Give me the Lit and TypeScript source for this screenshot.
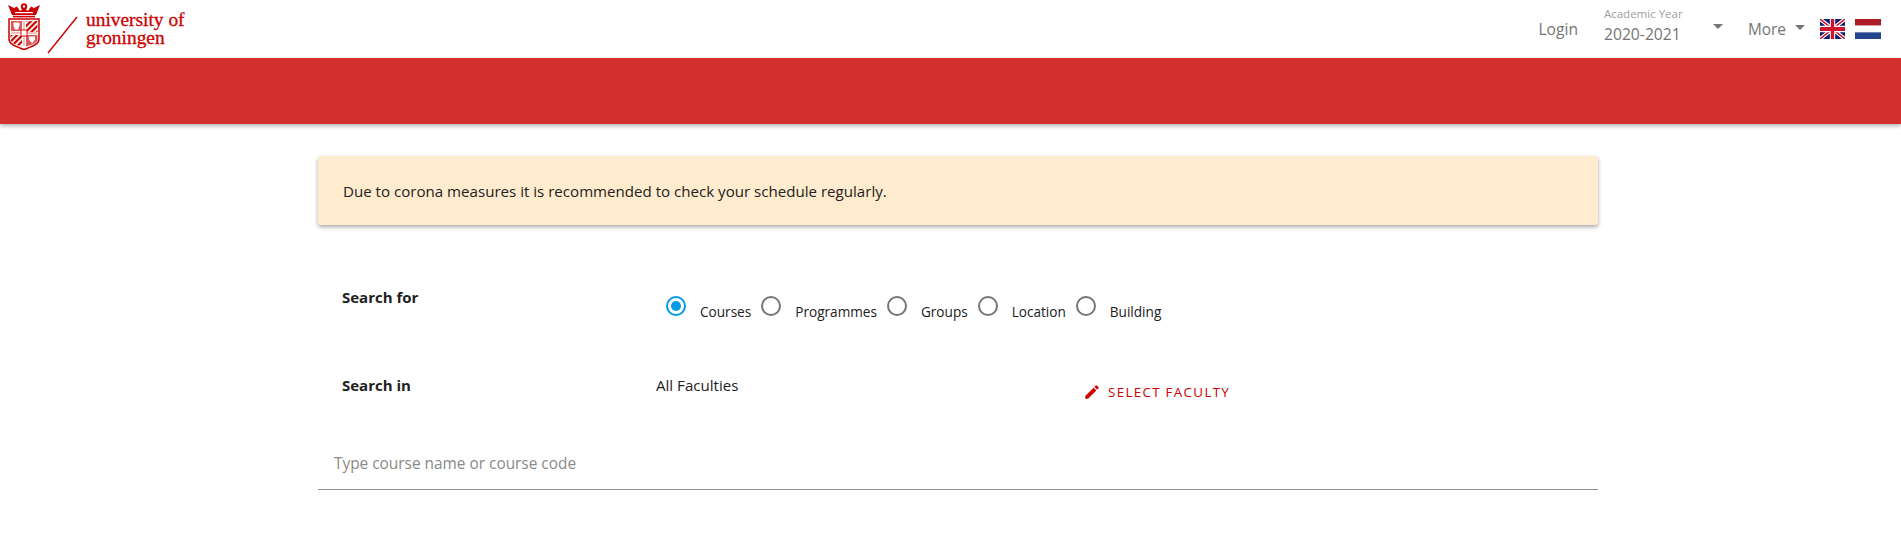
import { LitElement, html, css, svg } from "lit";
import { customElement } from "lit/decorators.js";

const crest = svg`<svg class="crest" viewBox="0 0 32 47" width="32" height="47">
  <defs>
    <pattern id="hatch" width="4" height="4" patternUnits="userSpaceOnUse" patternTransform="rotate(-45)">
      <rect width="4" height="2.2" fill="#cc0000"/>
    </pattern>
  </defs>
  <g fill="#cc0000">
    <path d="M0 2 L6 5 L9 3.5 L12 8 L16 5 L20 8 L23 3.5 L26 5 L32 2 L28 12 H4 Z"/>
    <circle cx="16" cy="3.4" r="3.2"/>
    <circle cx="16" cy="3.4" r="1.2" fill="#fff"/>
    <path d="M7 9 h18 v1.2 h-18 z" fill="#fff"/>
    <rect x="5" y="12.8" width="22" height="1.6"/>
  </g>
  <path d="M1 16 H31 V36 C31 42 22 44 16 46.5 C10 44 1 42 1 36 Z" fill="#fff" stroke="#cc0000" stroke-width="1.5"/>
  <g>
    <path d="M3 18 H14 V28 H3 Z" fill="#cc0000" opacity=".65"/>
    <path d="M5.5 19.5 h6 v3 l-1.5 4 h-3 l-1.5 -4 z" fill="#fff"/>
    <path d="M18 18 H29.5 V29 H18 Z" fill="url(#hatch)"/>
    <path d="M2.5 32 H14 V43.5 C10 42 2.5 41 2.5 36 Z" fill="url(#hatch)"/>
    <path d="M18 32 H29.5 V36 C29.5 41 22 42 18 43.5 Z" fill="#cc0000" opacity=".65"/>
    <path d="M21 33.5 h6 v3 l-2.5 3.5 h-1 l-2.5 -3.5 z" fill="#fff"/>
    <path d="M3 30 H29 M16 18 V43" stroke="#cc0000" stroke-width=".8" opacity=".6"/>
    <rect x="13" y="27" width="6" height="6" fill="#fff" stroke="#cc0000" stroke-width=".9"/>
  </g>
</svg>`;

const ukFlag = svg`<svg class="flag" viewBox="0 0 60 40" width="25" height="20" preserveAspectRatio="none">
  <rect width="60" height="40" fill="#0a1a6b"/>
  <path d="M0 0 L60 40 M60 0 L0 40" stroke="#fff" stroke-width="8"/>
  <path d="M0 0 L60 40 M60 0 L0 40" stroke="#cf142b" stroke-width="3"/>
  <path d="M30 0 V40 M0 20 H60" stroke="#fff" stroke-width="13"/>
  <path d="M30 0 V40 M0 20 H60" stroke="#cf142b" stroke-width="8"/>
</svg>`;

const nlFlag = svg`<svg class="flag" viewBox="0 0 3 3" width="26" height="20" preserveAspectRatio="none">
  <rect width="3" height="1" fill="#ae1c28"/>
  <rect y="1" width="3" height="1" fill="#fff"/>
  <rect y="2" width="3" height="1" fill="#21468b"/>
</svg>`;

const pencil = svg`<svg class="pencil" viewBox="0 0 24 24" width="18" height="18"><path fill="#cc0000" d="M3 17.25V21h3.75L17.81 9.94l-3.75-3.75L3 17.25zM20.71 7.04a1 1 0 0 0 0-1.41l-2.34-2.34a1 1 0 0 0-1.41 0l-1.83 1.83 3.75 3.75 1.83-1.83z"/></svg>`;

@customElement("app-root")
export class AppRoot extends LitElement {
  static styles = css`
    :host {
      display: block;
      width: 100%;
      min-height: 535px;
      background: #fff;
      font-family: "Open Sans", "Noto Sans", sans-serif;
      color: #212121;
      overflow: hidden;
    }
    .header {
      height: 58px;
      display: flex;
      align-items: flex-start;
      justify-content: space-between;
    }
    .logo {
      display: flex;
      align-items: flex-start;
      padding: 3px 0 0 8px;
    }
    .crest { display: block; }
    .slash { display: block; margin: 13px 0 0 7px; }
    .wordmark {
      margin: 8px 0 0 7px;
      font-family: "Liberation Serif", serif;
      font-size: 19.4px;
      line-height: 17.5px;
      color: #cc0000;
      font-weight: 400;
      -webkit-text-stroke: 0.3px #cc0000;
    }
    .nav {
      display: flex;
      align-items: flex-start;
      color: #757575;
      padding-right: 20px;
    }
    .login { font-size: 15.6px; line-height: 20px; margin-top: 19px; }
    .year { margin-left: 26px; width: 109px; margin-top: 7px; }
    .year-label { font-size: 11.5px; line-height: 13px; color: #9e9e9e; }
    .year-value { font-size: 15.7px; line-height: 20px; margin-top: 4px; }
    .caret {
      width: 0;
      height: 0;
      border-left: 5px solid transparent;
      border-right: 5px solid transparent;
      border-top: 5px solid #757575;
    }
    .caret.y { margin-top: 24px; }
    .more { font-size: 15.4px; line-height: 20px; margin: 20px 0 0 25px; }
    .caret.m { margin: 25px 0 0 9px; }
    .flag { display: block; margin-top: 19px; }
    .nav > .f1 { margin-left: 15px; }
    .nav > .f2 { margin-left: 10px; }
    .band {
      height: 66px;
      background: #d32f2f;
      box-shadow: 0 2px 4px rgba(0,0,0,.3);
    }
    .main {
      width: 1280px;
      margin: 32px 0 0 318px;
    }
    .alert {
      height: 69px;
      display: flex;
      align-items: center;
      padding-left: 25px;
      box-sizing: border-box;
      background: #ffebcd;
      border-radius: 3px;
      font-size: 15.1px;
      box-shadow: 0 2px 4px rgba(0,0,0,.35);
    }
    .row {
      display: grid;
      grid-template-columns: 316px 1fr;
      padding-left: 24px;
    }
    .row.for { margin-top: 62px; height: 88px; }
    .row.in { height: 69px; }
    .label { font-size: 15px; font-weight: 700; line-height: 20px; }
    .radios {
      display: flex;
      align-items: flex-start;
      margin: 6px 0 0 8px;
    }
    .radio {
      width: 20px;
      height: 20px;
      box-sizing: border-box;
      border: 2px solid #757575;
      border-radius: 50%;
      margin-top: 3px;
      flex: none;
      display: flex;
      align-items: center;
      justify-content: center;
    }
    .radio.on { border-color: #039be5; }
    .radio.on::after {
      content: "";
      width: 10px;
      height: 10px;
      background: #039be5;
      border-radius: 50%;
    }
    .radio-text {
      font-size: 13.6px;
      line-height: 18px;
      margin: 10px 10px 0 14px;
    }
    .in-cols { display: flex; align-items: flex-start; }
    .all { font-size: 15.1px; line-height: 20px; width: 427px; margin-left: -2px; }
    .select {
      display: flex;
      align-items: center;
      gap: 7px;
      margin-top: 7px;
      color: #cc0000;
      font-size: 13.4px;
      line-height: 20px;
      font-weight: 500;
      letter-spacing: 1.3px;
      text-transform: uppercase;
    }
    .search {
      height: 48px;
      box-sizing: border-box;
      border-bottom: 1px solid #8f8f8f;
      padding: 9px 0 0 16px;
      margin-top: -2px;
      font-size: 15.4px;
      line-height: 26px;
      color: #8a8a8a;
    }
  `;

  render() {
    const radios = [
      ["Courses", true],
      ["Programmes", false],
      ["Groups", false],
      ["Location", false],
      ["Building", false],
    ] as const;
    return html`
      <div class="header">
        <div class="logo">
          ${crest}
          <svg class="slash" viewBox="0 0 32 38" width="32" height="38"><path d="M1 37 L30 1" stroke="#cc0000" stroke-width="1.4" fill="none"/></svg>
          <div class="wordmark">university of<br />groningen</div>
        </div>
        <div class="nav">
          <div class="login">Login</div>
          <div class="year">
            <div class="year-label">Academic Year</div>
            <div class="year-value">2020-2021</div>
          </div>
          <div class="caret y"></div>
          <div class="more">More</div>
          <div class="caret m"></div>
          <div class="f1">${ukFlag}</div>
          <div class="f2">${nlFlag}</div>
        </div>
      </div>
      <div class="band"></div>
      <div class="main">
        <div class="alert">Due to corona measures it is recommended to check your schedule regularly.</div>
        <div class="row for">
          <div class="label">Search for</div>
          <div class="radios">
            ${radios.map(
              ([t, on]) => html`<span class="radio ${on ? "on" : ""}"></span><span class="radio-text">${t}</span>`
            )}
          </div>
        </div>
        <div class="row in">
          <div class="label">Search in</div>
          <div class="in-cols">
            <div class="all">All Faculties</div>
            <div class="select">${pencil}<span>Select Faculty</span></div>
          </div>
        </div>
        <div class="search">Type course name or course code</div>
      </div>
    `;
  }
}
